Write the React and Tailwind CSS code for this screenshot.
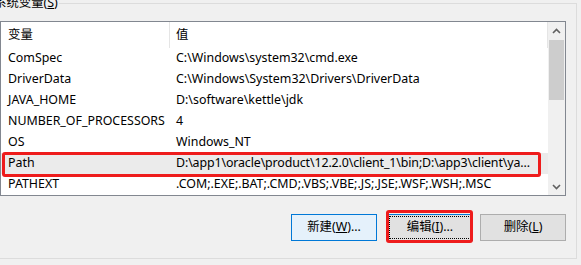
const rows = [
  ["ComSpec", "C:\\Windows\\system32\\cmd.exe"],
  ["DriverData", "C:\\Windows\\System32\\Drivers\\DriverData"],
  ["JAVA_HOME", "D:\\software\\kettle\\jdk"],
  ["NUMBER_OF_PROCESSORS", "4"],
  ["OS", "Windows_NT"],
  ["Path", "D:\\app1\\oracle\\product\\12.2.0\\client_1\\bin;D:\\app3\\client\\ya..."],
  ["PATHEXT", ".COM;.EXE;.BAT;.CMD;.VBS;.VBE;.JS;.JSE;.WSF;.WSH;.MSC"],
];

function Chevron({ up }) {
  return (
    <svg width="9" height="6" viewBox="0 0 9 6">
      <path
        d={up ? "M1 5 L4.5 1.5 L8 5" : "M1 1 L4.5 4.5 L8 1"}
        fill="none"
        stroke="#606060"
        strokeWidth="1.6"
      />
    </svg>
  );
}

export default function App() {
  return (
    <div className="relative h-[265px] w-[581px] overflow-hidden bg-[#f0f0f0] pt-[3px] font-['Noto_Sans','Noto_Sans_CJK_SC',sans-serif] text-[12.4px] text-black">
      {/* 系统变量 group box */}
      <div className="relative ml-[-10px] h-[256px] w-[587px] border border-[#dcdcdc] pl-[9px] pt-[17px]">
        <div className="absolute left-[2px] top-[-10px] bg-[#f0f0f0] px-[1px] leading-[17px]">
          系统变量(<span className="underline">S</span>)
        </div>

        <div className="flex h-[175px] w-[566px] border border-[#828790] bg-white">
          <div className="w-[547px]">
            <div className="flex h-[26px] items-center">
              <div className="flex h-full w-[169px] items-center border-r border-[#e5e5e5] pl-[7px]">
                变量
              </div>
              <div className="flex h-full flex-1 items-center border-r border-[#e5e5e5] pl-[6px]">
                值
              </div>
            </div>
            {rows.map(([name, value]) => (
              <div
                key={name}
                className={
                  name === "Path"
                    ? "flex h-[21px] items-center bg-[#ebebeb]"
                    : "flex h-[21px] items-center"
                }
              >
                <div className="w-[169px] whitespace-nowrap pl-[7px]">{name}</div>
                <div
                  className={
                    name === "Path"
                      ? "flex-1 overflow-hidden whitespace-nowrap pl-[6px] tracking-[-0.12px]"
                      : "flex-1 overflow-hidden whitespace-nowrap pl-[6px]"
                  }
                >
                  {value}
                </div>
              </div>
            ))}
          </div>

          <div className="flex w-[17px] flex-col bg-[#f0f0f0]">
            <div className="flex h-[17px] items-center justify-center">
              <Chevron up />
            </div>
            <div className="mx-[1px] mt-[1px] h-[60px] bg-[#cdcdcd]" />
            <div className="flex-1" />
            <div className="flex h-[17px] items-center justify-center">
              <Chevron />
            </div>
          </div>
        </div>

        <div className="mt-[18px] flex w-[566px] justify-end">
          <button
            type="button"
            className="flex h-[27px] w-[86px] items-center justify-center border border-[#0078d7] bg-[#e5f1fb]"
          >
            新建(<span className="underline">W</span>)...
          </button>
          <button
            type="button"
            className="relative ml-[10px] flex h-[27px] w-[86px] items-center justify-center border border-[#0078d7] bg-[#e1e1e1]"
          >
            <span className="absolute inset-[1px] border border-dotted border-black" />
            编辑(<span className="underline">I</span>)...
          </button>
          <button
            type="button"
            className="ml-[7px] flex h-[27px] w-[86px] items-center justify-center border border-[#adadad] bg-[#e1e1e1]"
          >
            删除(<span className="underline">L</span>)
          </button>
        </div>
      </div>

      {/* red annotation frames */}
      <div className="pointer-events-none absolute left-[2px] top-[152px] h-[25px] w-[539px] rounded-[3px] border-[3px] border-[#ee1c1c]" />
      <div className="pointer-events-none absolute left-[386px] top-[210px] h-[33px] w-[87px] rounded-[3px] border-[3px] border-[#ee1c1c]" />
    </div>
  );
}
